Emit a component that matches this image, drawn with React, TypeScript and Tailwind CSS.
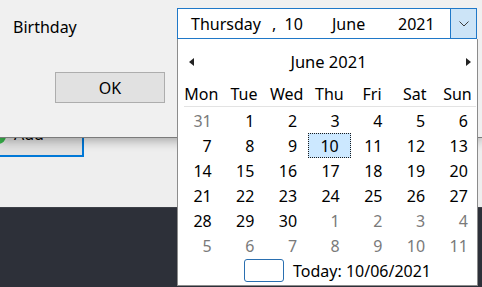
import React from "react";

type Day = { n: number; out?: boolean };

const weeks: Day[][] = [
  [{ n: 31, out: true }, { n: 1 }, { n: 2 }, { n: 3 }, { n: 4 }, { n: 5 }, { n: 6 }],
  [{ n: 7 }, { n: 8 }, { n: 9 }, { n: 10 }, { n: 11 }, { n: 12 }, { n: 13 }],
  [{ n: 14 }, { n: 15 }, { n: 16 }, { n: 17 }, { n: 18 }, { n: 19 }, { n: 20 }],
  [{ n: 21 }, { n: 22 }, { n: 23 }, { n: 24 }, { n: 25 }, { n: 26 }, { n: 27 }],
  [{ n: 28 }, { n: 29 }, { n: 30 }, { n: 1, out: true }, { n: 2, out: true }, { n: 3, out: true }, { n: 4, out: true }],
  [{ n: 5, out: true }, { n: 6, out: true }, { n: 7, out: true }, { n: 8, out: true }, { n: 9, out: true }, { n: 10, out: true }, { n: 11, out: true }],
];

const dayNames = ["Mon", "Tue", "Wed", "Thu", "Fri", "Sat", "Sun"];

function Calendar() {
  return (
    <div className="absolute left-[177px] top-[39px] w-[301px] h-[247px] bg-white border-l border-r border-b border-[#8c8c8c] z-20 text-[16px] text-black overflow-hidden">
      {/* month header */}
      <div className="mt-[11px] h-[24px] flex items-center justify-between pl-[11px] pr-[6px]">
        <svg width="5" height="8" viewBox="0 0 5 8">
          <polygon points="5,0 0,4 5,8" fill="#222" />
        </svg>
        <span className="text-[16.5px] -ml-[3px]">June 2021</span>
        <svg width="5" height="8" viewBox="0 0 5 8">
          <polygon points="0,0 5,4 0,8" fill="#222" />
        </svg>
      </div>

      {/* day names */}
      <div className="mt-[8px] h-[24px] pl-[2px] grid grid-cols-[repeat(7,42.7px)]">
        {dayNames.map((d) => (
          <div key={d} className="flex items-center justify-center">
            {d}
          </div>
        ))}
      </div>
      <div className="ml-[6px] mr-[1px] h-px bg-[#e3e3e3]" />

      {/* days */}
      <div className="pl-[2px] pt-[1px] grid grid-cols-[repeat(7,42.7px)] auto-rows-[25px]">
        {weeks.flat().map((d, i) => {
          const selected = !d.out && d.n === 10;
          return (
            <div
              key={i}
              className={
                "flex items-center justify-end pr-[11px] " +
                (d.out ? "text-[#7a7a7a] " : "") +
                (selected ? "bg-[#cce8ff] border border-dotted border-[#1a1a1a]" : "")
              }
            >
              {d.n}
            </div>
          );
        })}
      </div>

      {/* today */}
      <div className="mt-[1px] h-[23px] flex items-center pl-[66px]">
        <div className="w-[40px] h-[23px] rounded-[3px] border border-[#2a6fb0]" />
        <span className="ml-[9px] text-[16px]">Today: 10/06/2021</span>
      </div>
    </div>
  );
}

function DateCombo() {
  return (
    <div className="w-[300px] h-[31px] border border-[#1f78c8] bg-white flex items-center text-[16px] text-black">
      <span className="ml-[13px] w-[81px]">Thursday</span>
      <span className="w-[60px]">,&nbsp;&nbsp;10</span>
      <span className="w-[66px]">June</span>
      <span className="w-[52px]">2021</span>
      <div className="ml-auto w-[26px] h-full bg-[#cce4f7] border-l border-[#1f78c8] flex items-center justify-center">
        <svg width="10" height="6" viewBox="0 0 10 6">
          <polyline points="0.5,0.5 5,5 9.5,0.5" fill="none" stroke="#3c3c3c" strokeWidth="1" />
        </svg>
      </div>
    </div>
  );
}

export default function App() {
  return (
    <div className="relative w-[482px] h-[287px] overflow-hidden font-['Noto_Sans',sans-serif] bg-[#efefef]">
      {/* main window underneath */}
      <div className="flex flex-col h-full">
        <div className="h-[207px] bg-[#eeeeee] pt-[120px]">
          <button className="ml-[-20px] w-[104px] h-[37px] border-2 border-[#0078d7] bg-[#e1e1e1] flex items-start pl-[8px] text-[16px] text-black">
            <span className="mt-[6px] w-[16px] h-[16px] rounded-full bg-[#38b04a]" />
            <span className="ml-[8px]">Add</span>
          </button>
        </div>
        <div className="flex-1 bg-[#2d3039] border-t border-[#3d4048]" />
      </div>

      {/* dialog */}
      <div className="absolute left-0 top-0 w-full h-[138px] bg-[#f0f0f0] border-b border-[#7b7b7b] shadow-[0_3px_10px_rgba(0,0,0,0.3)] z-10 flex">
        <div className="w-[177px] flex flex-col">
          <span className="ml-[13px] mt-[15px] text-[16px] text-black">Birthday</span>
          <button className="ml-[55px] mt-[33px] w-[110px] h-[31px] bg-[#e1e1e1] border border-[#adadad] text-[16px] text-black">
            OK
          </button>
        </div>
        <div className="pt-[8px]">
          <DateCombo />
        </div>
      </div>

      <Calendar />
    </div>
  );
}
